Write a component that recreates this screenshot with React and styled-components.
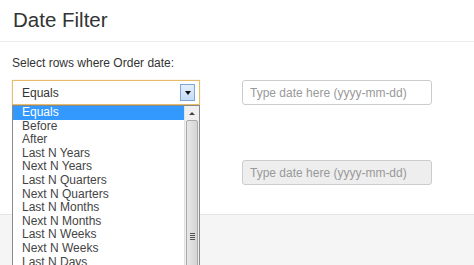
import React from 'react';
import styled, { createGlobalStyle } from 'styled-components';

const GlobalStyle = createGlobalStyle`
  html, body {
    margin: 0;
    padding: 0;
    background: #fff;
    font-family: "Liberation Sans", Arial, sans-serif;
    color: #333;
  }
`;

const Modal = styled.div`
  width: 474px;
  height: 265px;
  overflow: hidden;
  display: flex;
  flex-direction: column;
`;

const Header = styled.div`
  height: 42px;
  box-sizing: border-box;
  padding: 9px 13px 0;
  border-bottom: 1px solid #ececec;
`;

const Title = styled.h4`
  margin: 0;
  font-size: 20.5px;
  font-weight: normal;
  line-height: 22px;
  color: #333;
`;

const Body = styled.div`
  height: 172px;
  box-sizing: border-box;
  padding: 14px 12px 0;
  position: relative;
`;

const Label = styled.div`
  font-size: 12px;
  line-height: 14px;
  margin-bottom: 10px;
`;

const Row = styled.div`
  display: flex;
  gap: 42px;
  height: 25px;
  margin-bottom: ${p => p.$gap || 0}px;
`;

const Cell = styled.div`
  width: 188px;
  position: relative;
`;

const SelectBox = styled.div`
  box-sizing: border-box;
  width: 188px;
  height: 25px;
  border: 1px solid #e6bb6a;
  box-shadow: 0 0 1px rgba(230, 187, 106, 0.6);
  display: flex;
  align-items: center;
  justify-content: space-between;
  padding: 0 4px 0 9px;
  font-size: 12px;
  background: #fff;
`;

const ArrowButton = styled.div`
  box-sizing: border-box;
  width: 15px;
  height: 17px;
  border: 1px solid #7ea7d3;
  background: linear-gradient(#e4effb, #c5dcf5);
  display: flex;
  align-items: center;
  justify-content: center;
`;

const Triangle = styled.span`
  width: 0;
  height: 0;
  border-left: 3px solid transparent;
  border-right: 3px solid transparent;
  border-top: 4px solid #111;
`;

const DateInput = styled.input`
  box-sizing: border-box;
  width: 190px;
  height: 25px;
  border: 1px solid #ccc;
  border-radius: 3px;
  padding: 0 7px;
  font-family: "Liberation Sans", Arial, sans-serif;
  font-size: 12px;
  color: #555;
  background: ${p => (p.disabled ? '#eee' : '#fff')};
  &::placeholder {
    color: #999;
  }
`;

const List = styled.div`
  position: absolute;
  top: 25px;
  left: 0;
  width: 186px;
  height: 200px;
  border: 1px solid #8a8a8a;
  background: #fff;
  display: flex;
  z-index: 2;
`;

const Options = styled.div`
  flex: 1;
`;

const Option = styled.div`
  font-size: 12px;
  line-height: 13.6px;
  padding-left: 9px;
  color: ${p => (p.$active ? '#fff' : '#444')};
  background: ${p => (p.$active ? '#3399ff' : 'transparent')};
  white-space: nowrap;
`;

const Scrollbar = styled.div`
  width: 14px;
  display: flex;
  flex-direction: column;
  background: #f0f0f0;
  border-left: 1px solid #e2e2e2;
`;

const ScrollUp = styled.div`
  height: 14px;
  display: flex;
  align-items: center;
  justify-content: center;
`;

const UpTriangle = styled.span`
  width: 0;
  height: 0;
  border-left: 3px solid transparent;
  border-right: 3px solid transparent;
  border-bottom: 3px solid #444;
`;

const Thumb = styled.div`
  flex: 1;
  margin: 0 1px;
  border: 1px solid #a9a9a9;
  border-radius: 2px;
  background: linear-gradient(90deg, #e8e8e8, #d4d4d4);
  display: flex;
  justify-content: center;
  padding-top: 112px;
`;

const Grip = styled.div`
  width: 5px;
  height: 7px;
  background: repeating-linear-gradient(#555 0 1px, transparent 1px 2px);
`;

const Footer = styled.div`
  flex: 1;
  background: #f5f5f5;
  border-top: 1px solid #e5e5e5;
`;

const options = [
  'Equals',
  'Before',
  'After',
  'Last N Years',
  'Next N Years',
  'Last N Quarters',
  'Next N Quarters',
  'Last N Months',
  'Next N Months',
  'Last N Weeks',
  'Next N Weeks',
  'Last N Days',
  'Next N Days',
];

export default function App() {
  return (
    <Modal>
      <GlobalStyle />
      <Header>
        <Title>Date Filter</Title>
      </Header>
      <Body>
        <Label>Select rows where Order date:</Label>
        <Row $gap={55}>
          <Cell>
            <SelectBox>
              <span>Equals</span>
              <ArrowButton>
                <Triangle />
              </ArrowButton>
            </SelectBox>
            <List>
              <Options>
                {options.map((o, i) => (
                  <Option key={o} $active={i === 0}>{o}</Option>
                ))}
              </Options>
              <Scrollbar>
                <ScrollUp>
                  <UpTriangle />
                </ScrollUp>
                <Thumb>
                  <Grip />
                </Thumb>
              </Scrollbar>
            </List>
          </Cell>
          <DateInput placeholder="Type date here (yyyy-mm-dd)" />
        </Row>
        <Row>
          <Cell />
          <DateInput placeholder="Type date here (yyyy-mm-dd)" disabled />
        </Row>
      </Body>
      <Footer />
    </Modal>
  );
}
